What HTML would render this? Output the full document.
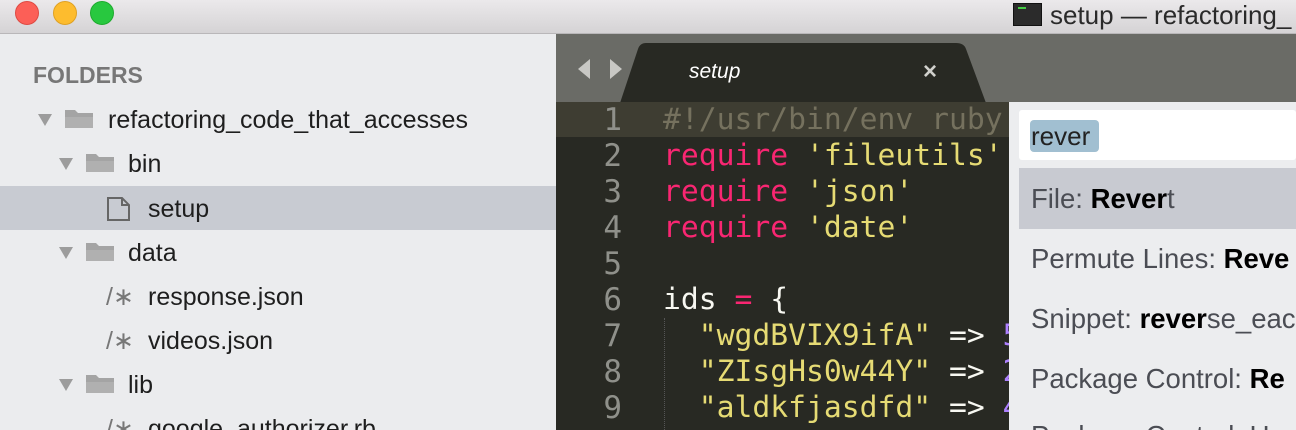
<!DOCTYPE html>
<html style="overflow:hidden;width:1296px;height:430px"><head><style>
*{margin:0;padding:0;box-sizing:border-box}
body{width:1296px;height:430px;overflow:hidden;position:relative;font-family:"Liberation Sans",sans-serif;background:#282923}
.a{position:absolute;white-space:pre}
#title{left:0;top:0;width:1296px;height:34px;background:linear-gradient(#ebe9eb,#d5d3d5);border-bottom:1px solid #b9b7b9}
.dot{position:absolute;top:1px;width:24px;height:24px;border-radius:50%}
#side{left:0;top:34px;width:556px;height:396px;background:#ebecee;overflow:hidden}
.row{position:absolute;left:0;width:556px;height:44px;font-size:25px;color:#1e1e1e;line-height:44px}
.row span{top:1px}
.tri{position:absolute;top:17px;width:0;height:0;border-left:7px solid transparent;border-right:7px solid transparent;border-top:12px solid #9c9c9c}
.fold{position:absolute;top:11px;width:32px;height:22px}
.code{font-family:"DejaVu Sans Mono",monospace;font-size:29.7px;line-height:36px;color:#f8f8f2}
.ln{position:absolute;left:0;top:0;color:#8f908a;width:66px;text-align:right;font-family:"DejaVu Sans Mono",monospace;font-size:31px;line-height:36px}
.k{color:#f92672}.s{color:#e6db74}.c{color:#75715e}.n{color:#ae81ff}
.it{position:absolute;left:22px;font-size:27.5px;color:#4b4d54}
.it b{color:#000}
</style></head><body>
<div class="a" id="title">
<div class="dot" style="left:15px;background:#fc5f57;border:1px solid #de4a43"></div>
<div class="dot" style="left:53px;background:#fdbc2e;border:1px solid #dfa123"></div>
<div class="dot" style="left:90px;background:#28c83f;border:1px solid #1eab2e"></div>
<div class="a" style="left:1013px;top:3px;width:29px;height:23px;background:#2b2b2b;border:1px solid #111"><div style="position:absolute;left:4px;top:3px;width:8px;height:2px;background:#4c4"></div></div>
<div class="a" style="left:1050px;top:0;font-size:26px;line-height:30px;color:#2a2a2a">setup — refactoring_</div>
</div>
<div class="a" id="side">
<div class="a" style="left:33px;top:28px;font-size:23px;font-weight:bold;color:#777">FOLDERS</div>
<div class="row" style="top:63px"><div class="tri" style="left:38px"></div><svg class="fold" style="left:63px" viewBox="0 0 32 22"><path d="M2 2h10l3 3h15v15H2z" fill="#a4a4a4"/><path d="M2 9h28v11H2z" fill="#b0b0b0"/></svg><span class="a" style="left:108px">refactoring_code_that_accesses</span></div>
<div class="row" style="top:107px"><div class="tri" style="left:59px"></div><svg class="fold" style="left:84px" viewBox="0 0 32 22"><path d="M2 2h10l3 3h15v15H2z" fill="#a4a4a4"/><path d="M2 9h28v11H2z" fill="#b0b0b0"/></svg><span class="a" style="left:128px">bin</span></div>
<div class="row" style="top:152px;background:#c8cbd2"><svg class="a" style="left:106px;top:10px" width="26" height="26" viewBox="0 0 26 26"><path d="M2 2h14l7 7v15H2z" fill="none" stroke="#666" stroke-width="2"/><path d="M16 2v7h7" fill="none" stroke="#666" stroke-width="2"/></svg><span class="a" style="left:148px">setup</span></div>
<div class="row" style="top:196px"><div class="tri" style="left:59px"></div><svg class="fold" style="left:84px" viewBox="0 0 32 22"><path d="M2 2h10l3 3h15v15H2z" fill="#a4a4a4"/><path d="M2 9h28v11H2z" fill="#b0b0b0"/></svg><span class="a" style="left:128px">data</span></div>
<div class="row" style="top:240px"><span class="a" style="left:106px;color:#777">/∗</span><span class="a" style="left:148px">response.json</span></div>
<div class="row" style="top:284px"><span class="a" style="left:106px;color:#777">/∗</span><span class="a" style="left:148px">videos.json</span></div>
<div class="row" style="top:328px"><div class="tri" style="left:59px"></div><svg class="fold" style="left:84px" viewBox="0 0 32 22"><path d="M2 2h10l3 3h15v15H2z" fill="#a4a4a4"/><path d="M2 9h28v11H2z" fill="#b0b0b0"/></svg><span class="a" style="left:128px">lib</span></div>
<div class="row" style="top:372px"><span class="a" style="left:106px;color:#777">/∗</span><span class="a" style="left:148px">google_authorizer.rb</span></div>
</div>
<div class="a" style="left:556px;top:34px;width:740px;height:68px;background:#6a6b66"></div>
<svg class="a" style="left:576px;top:58px" width="48" height="22"><path d="M2 11l12-10v20z M46 11l-12-10v20z" fill="#c8c8c4"/></svg>
<svg class="a" style="left:618px;top:43px" width="370" height="60"><path d="M28 0h310q8 0 10 6l20 54H2l18-54q2-6 8-6z" fill="#282923"/></svg>
<div class="a" style="left:689px;top:60px;font-size:21px;font-style:italic;color:#fff">setup</div>
<div class="a" style="left:923px;top:58px;font-size:24px;font-weight:bold;color:#d0d0cc">×</div>
<div class="a" style="left:556px;top:102px;width:740px;height:328px;overflow:hidden">
<div class="a" style="left:0;top:0;width:740px;height:35px;background:#3e3d32"></div>
<div class="ln">1<br>2<br>3<br>4<br>5<br>6<br>7<br>8<br>9</div>
<div class="a" style="left:108px;top:216px;width:0;height:112px;border-left:1px dotted #555"></div>
<div class="a code" style="left:107px;top:0"><span class="c">#!/usr/bin/env ruby</span>
<span class="k">require</span> <span class="s">'fileutils'</span>
<span class="k">require</span> <span class="s">'json'</span>
<span class="k">require</span> <span class="s">'date'</span>

ids <span class="k">=</span> {
  <span class="s">"wgdBVIX9ifA"</span> =&gt; <span class="n">5</span>
  <span class="s">"ZIsgHs0w44Y"</span> =&gt; <span class="n">2</span>
  <span class="s">"aldkfjasdfd"</span> =&gt; <span class="n">4</span>
}</div>
</div>
<div class="a" style="left:1009px;top:102px;width:287px;height:328px;background:#ecedef;overflow:hidden">
<div class="a" style="left:10px;top:8px;width:277px;height:50px;background:#fff;border-radius:3px"></div>
<div class="a" style="left:21px;top:18px;width:69px;height:32px;background:#a1bfd1;border-radius:4px"></div>
<div class="a" style="left:22px;top:18px;font-size:26px;line-height:32px;color:#222">rever</div>
<div class="a" style="left:10px;top:66px;width:277px;height:61px;background:#c8cad1"></div>
<div class="it" style="top:81px">File: <b>Rever</b>t</div>
<div class="it" style="top:141px">Permute Lines: <b>Reve</b></div>
<div class="it" style="top:201px">Snippet: <b>rever</b>se_eac</div>
<div class="it" style="top:261px">Package Control: <b>Re</b></div>
<div class="it" style="top:318px">Package Control: U</div>
</div>
</body></html>
